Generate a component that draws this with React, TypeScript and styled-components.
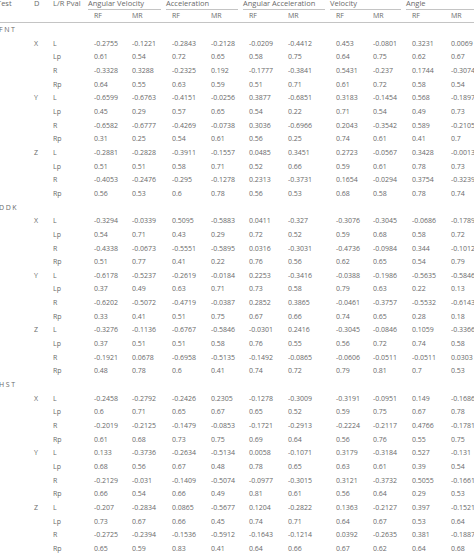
import { createGlobalStyle, styled } from 'styled-components';

const GlobalStyle = createGlobalStyle`
  html, body {
    margin: 0;
    padding: 0;
    background: #ffffff;
  }
  body {
    font-family: "Open Sans", "Liberation Sans", sans-serif;
  }
`;

// column widths, first three are label columns, then RF/MR pairs
const colWidths = [37, 19, 35, 38, 40, 39, 38, 39, 48, 37, 39, 39, 45];

const groups = ['Angular Velocity', 'Acceleration', 'Angular Acceleration', 'Velocity', 'Angle'];

const pvalLabels = ['L', 'Lp', 'R', 'Rp'];

type Section = {
  name: string;
  axes: { axis: string; rows: string[] }[];
};

const sections: Section[] = [
  {
    name: 'FNT',
    axes: [
      {
        axis: 'X',
        rows: [
          '-0.2755 -0.1221 -0.2843 -0.2128 -0.0209 -0.4412 0.453 -0.0801 0.3231 0.0069',
          '0.61 0.54 0.72 0.65 0.58 0.75 0.64 0.75 0.62 0.67',
          '-0.3328 0.3288 -0.2325 0.192 -0.1777 -0.3841 0.5431 -0.237 0.1744 -0.3074',
          '0.64 0.55 0.63 0.59 0.51 0.71 0.61 0.72 0.58 0.54',
        ],
      },
      {
        axis: 'Y',
        rows: [
          '-0.6599 -0.6763 -0.4151 -0.0256 0.3877 -0.6851 0.3183 -0.1454 0.568 -0.1897',
          '0.45 0.29 0.57 0.65 0.54 0.22 0.71 0.54 0.49 0.73',
          '-0.6582 -0.6777 -0.4269 -0.0738 0.3036 -0.6966 0.2043 -0.3542 0.589 -0.2105',
          '0.31 0.25 0.54 0.61 0.56 0.25 0.74 0.61 0.41 0.7',
        ],
      },
      {
        axis: 'Z',
        rows: [
          '-0.2881 -0.2828 -0.3911 -0.1557 0.0485 0.3451 0.2723 -0.0567 0.3428 -0.0013',
          '0.51 0.51 0.58 0.71 0.52 0.66 0.59 0.61 0.78 0.73',
          '-0.4053 -0.2476 -0.295 -0.1278 0.2313 -0.3731 0.1654 -0.0294 0.3754 -0.3239',
          '0.56 0.53 0.6 0.78 0.56 0.53 0.68 0.58 0.78 0.74',
        ],
      },
    ],
  },
  {
    name: 'DDK',
    axes: [
      {
        axis: 'X',
        rows: [
          '-0.3294 -0.0339 0.5095 -0.5883 0.0411 -0.327 -0.3076 -0.3045 -0.0686 -0.1789',
          '0.54 0.71 0.43 0.29 0.72 0.52 0.59 0.68 0.58 0.72',
          '-0.4338 -0.0673 -0.5551 -0.5895 0.0316 -0.3031 -0.4736 -0.0984 0.344 -0.1012',
          '0.51 0.77 0.41 0.22 0.76 0.56 0.62 0.65 0.54 0.79',
        ],
      },
      {
        axis: 'Y',
        rows: [
          '-0.6178 -0.5237 -0.2619 -0.0184 0.2253 -0.3416 -0.0388 -0.1986 -0.5635 -0.5846',
          '0.37 0.49 0.63 0.71 0.73 0.58 0.79 0.63 0.22 0.13',
          '-0.6202 -0.5072 -0.4719 -0.0387 0.2852 0.3865 -0.0461 -0.3757 -0.5532 -0.6143',
          '0.33 0.41 0.51 0.75 0.67 0.66 0.74 0.65 0.28 0.18',
        ],
      },
      {
        axis: 'Z',
        rows: [
          '-0.3276 -0.1136 -0.6767 -0.5846 -0.0301 0.2416 -0.3045 -0.0846 0.1059 -0.3366',
          '0.37 0.51 0.51 0.58 0.76 0.55 0.56 0.72 0.74 0.58',
          '-0.1921 0.0678 -0.6958 -0.5135 -0.1492 -0.0865 -0.0606 -0.0511 -0.0511 0.0303',
          '0.48 0.78 0.6 0.41 0.74 0.72 0.79 0.81 0.7 0.53',
        ],
      },
    ],
  },
  {
    name: 'HST',
    axes: [
      {
        axis: 'X',
        rows: [
          '-0.2458 -0.2792 -0.2426 0.2305 -0.1278 -0.3009 -0.3191 -0.0951 0.149 -0.1686',
          '0.6 0.71 0.65 0.67 0.65 0.52 0.59 0.75 0.67 0.78',
          '-0.2019 -0.2125 -0.1479 -0.0853 -0.1721 -0.2913 -0.2224 -0.2117 0.4766 -0.1781',
          '0.61 0.68 0.73 0.75 0.69 0.64 0.56 0.76 0.55 0.75',
        ],
      },
      {
        axis: 'Y',
        rows: [
          '0.133 -0.3736 -0.2634 -0.5134 0.0058 -0.1071 0.3179 -0.3184 0.527 -0.131',
          '0.68 0.56 0.67 0.48 0.78 0.65 0.63 0.61 0.39 0.54',
          '-0.2129 -0.031 -0.1409 -0.5074 -0.0977 -0.3015 0.3121 -0.3732 0.5055 -0.1661',
          '0.66 0.54 0.66 0.49 0.81 0.61 0.56 0.64 0.29 0.53',
        ],
      },
      {
        axis: 'Z',
        rows: [
          '-0.207 -0.2834 0.0865 -0.5677 0.1204 -0.2822 0.1363 -0.2127 0.397 -0.1521',
          '0.73 0.67 0.66 0.45 0.74 0.71 0.64 0.67 0.53 0.64',
          '-0.2725 -0.2394 -0.1536 -0.5912 -0.1643 -0.1214 0.0392 -0.2635 0.381 -0.1887',
          '0.65 0.59 0.83 0.41 0.64 0.66 0.67 0.62 0.64 0.68',
        ],
      },
    ],
  },
];

function App() {
  return (
    <>
      <GlobalStyle />
      <Page>
        <Table>
          <colgroup>
            {colWidths.map((w, i) => (
              <col key={i} style={{ width: w }} />
            ))}
          </colgroup>
          <thead>
            <tr>
              <HeadCell rowSpan={2}>Test</HeadCell>
              <HeadCell rowSpan={2}>D</HeadCell>
              <HeadCell rowSpan={2}>L/R Pval</HeadCell>
              {groups.map((g) => (
                <GroupCell key={g} colSpan={2}>
                  <GroupLabel>{g}</GroupLabel>
                </GroupCell>
              ))}
            </tr>
            <tr>
              {groups.map((g) => [
                <SubCell key={g + 'rf'}>RF</SubCell>,
                <SubCell key={g + 'mr'}>MR</SubCell>,
              ])}
            </tr>
          </thead>
          <tbody>
            {sections.map((s) => [
              <tr key={s.name}>
                <SectionCell colSpan={13}>{s.name}</SectionCell>
              </tr>,
              ...s.axes.flatMap((a) =>
                a.rows.map((row, ri) => (
                  <tr key={s.name + a.axis + ri}>
                    <LabelCell />
                    <LabelCell>{ri === 0 ? a.axis : ''}</LabelCell>
                    <LabelCell>{pvalLabels[ri]}</LabelCell>
                    {row.split(' ').map((v, vi) => (
                      <ValueCell key={vi}>{v}</ValueCell>
                    ))}
                  </tr>
                ))
              ),
            ])}
          </tbody>
        </Table>
      </Page>
    </>
  );
}

export default App;

const Page = styled.div`
  width: 474px;
  height: 556px;
  overflow: hidden;
  background: #ffffff;
`;

const Table = styled.table`
  table-layout: fixed;
  width: 493px;
  margin: -3px 0 0 -3px;
  border-collapse: separate;
  border-spacing: 0;
  color: #6a6a6a;
  font-weight: 400;
  white-space: nowrap;
`;

const HeadCell = styled.th`
  padding: 0;
  height: 25px;
  line-height: 12px;
  vertical-align: top;
  text-align: left;
  font-size: 7.5px;
  font-weight: 400;
  border-bottom: 1px solid #c4c4c4;
`;

const GroupCell = styled.th`
  padding: 0;
  text-align: left;
  font-weight: 400;
`;

const GroupLabel = styled.div`
  margin-right: 5px;
  height: 12px;
  line-height: 12px;
  font-size: 7.5px;
  border-bottom: 1px solid #c4c4c4;
`;

const SubCell = styled.th`
  padding: 0 0 0 6px;
  height: 12px;
  line-height: 12px;
  text-align: left;
  font-size: 7px;
  font-weight: 400;
  border-bottom: 1px solid #c4c4c4;
`;

const SectionCell = styled.td`
  padding: 0 0 0 2px;
  height: 13.65px;
  line-height: 13.65px;
  font-size: 7px;
  letter-spacing: 1.6px;
`;

const LabelCell = styled.td`
  padding: 0;
  height: 13.65px;
  line-height: 13.65px;
  font-size: 7px;
`;

const ValueCell = styled.td`
  padding: 0 0 0 6px;
  height: 13.65px;
  line-height: 13.65px;
  font-size: 7px;
  overflow: hidden;
`;
